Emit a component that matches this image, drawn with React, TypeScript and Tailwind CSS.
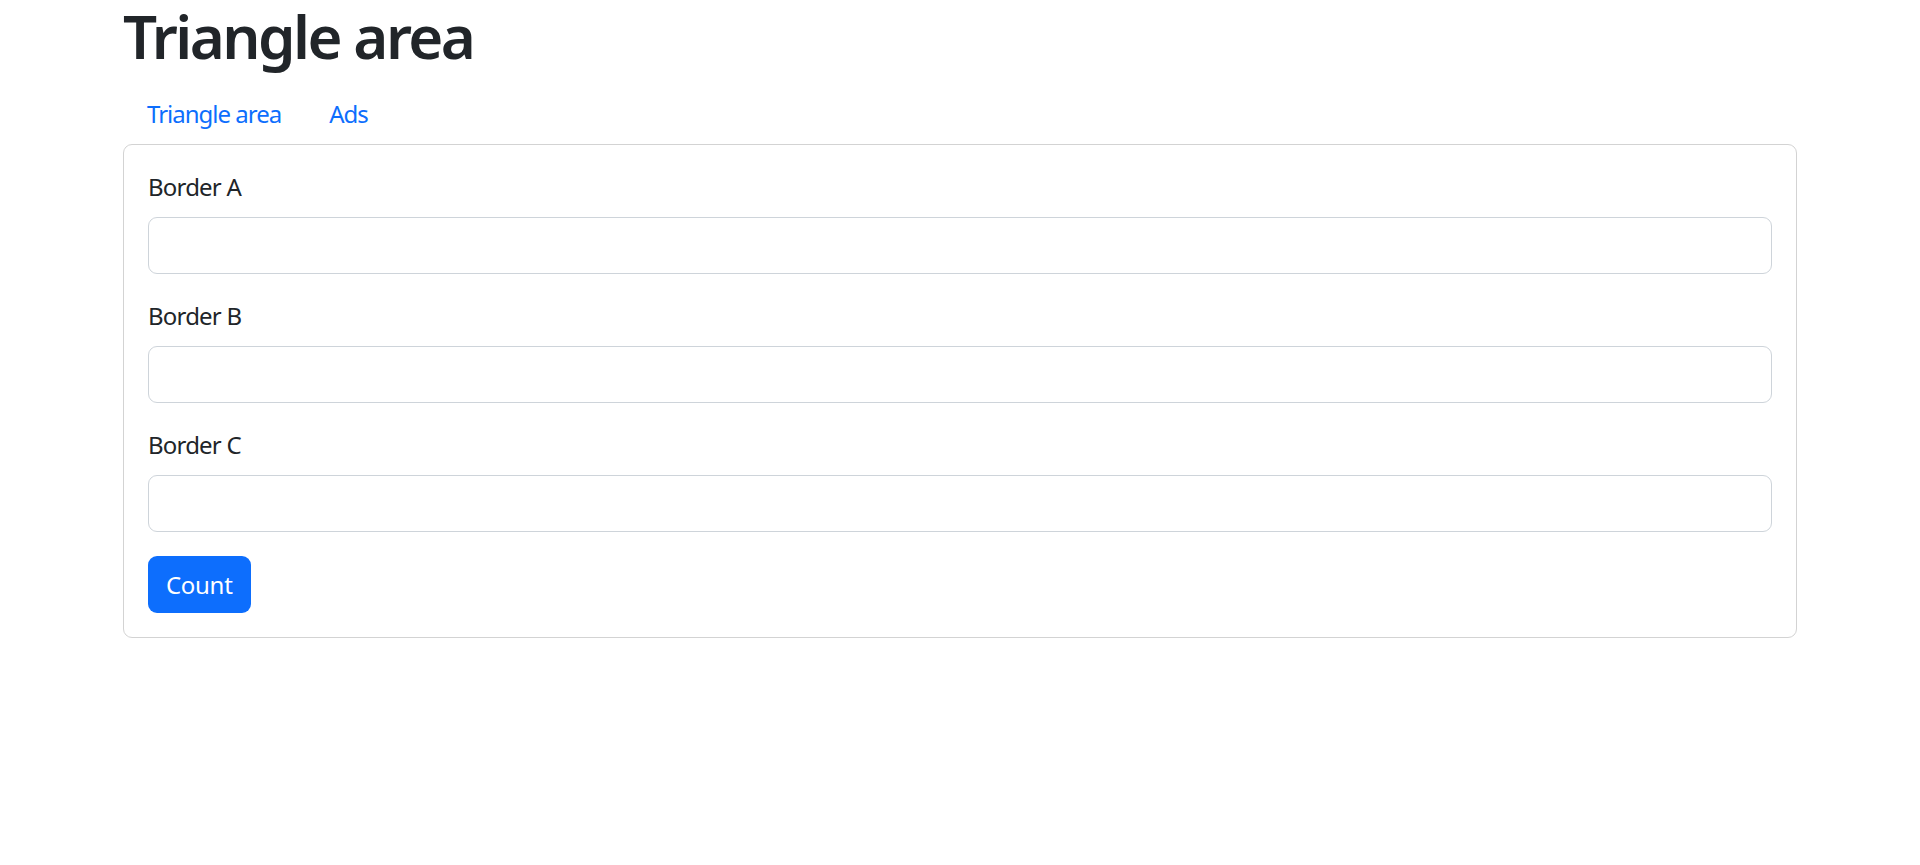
export default function App() {
  const fields = ["Border A", "Border B", "Border C"];
  return (
    <div className="min-h-[865px] bg-white text-[#212529]" style={{ fontFamily: '"Noto Sans", "Open Sans", sans-serif' }}>
      <div className="mx-auto w-[1710px] px-[18px]">
        <h1 className="m-0 mb-[12px] text-[60px] font-semibold leading-[72px] tracking-[-2.5px]">Triangle area</h1>
        <ul className="flex">
          <li>
            <a className="block px-[24px] py-[12px] text-[24px] leading-[36px] tracking-[-1px] text-[#0d6efd]" href="#">Triangle area</a>
          </li>
          <li>
            <a className="block px-[24px] py-[12px] text-[24px] leading-[36px] tracking-[-1px] text-[#0d6efd]" href="#">Ads</a>
          </li>
        </ul>
        <div className="rounded-[9px] border-[1.5px] border-[#d3d3d3] p-[24px]">
          {fields.map((f) => (
            <div key={f} className="mb-[24px]">
              <label className="mb-[12px] block text-[24px] leading-[36px] tracking-[-0.8px]">{f}</label>
              <input type="text" className="block h-[57px] w-full rounded-[9px] border-[1.5px] border-[#ced4da] px-[18px] text-[24px] outline-none" />
            </div>
          ))}
          <button className="h-[57px] rounded-[9px] bg-[#0d6efd] px-[18px] text-[24px] leading-[36px] tracking-[-0.3px] text-white">Count</button>
        </div>
      </div>
    </div>
  );
}
